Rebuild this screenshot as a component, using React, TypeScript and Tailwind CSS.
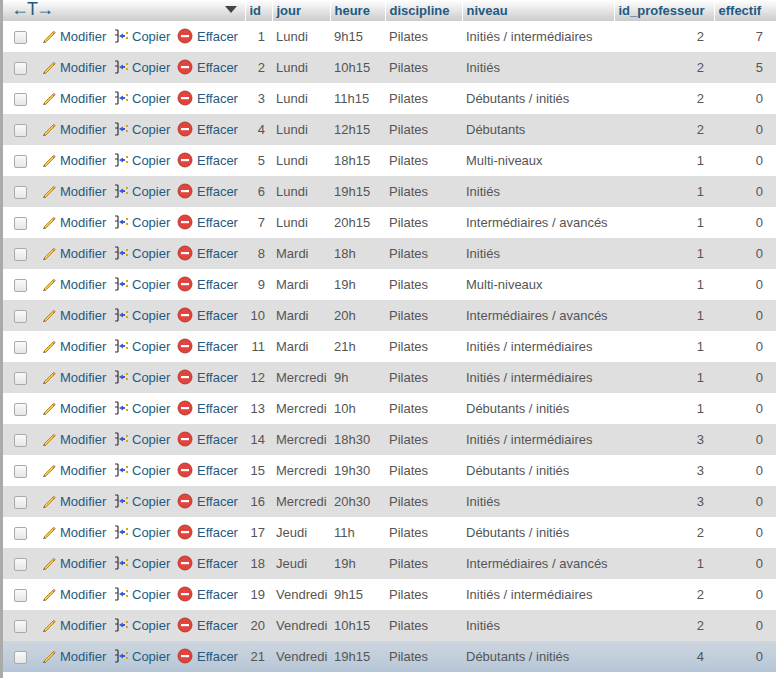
import React from "react";

const rows: [number, string, string, string, number, number][] = [
  [1, "Lundi", "9h15", "Initiés / intermédiaires", 2, 7],
  [2, "Lundi", "10h15", "Initiés", 2, 5],
  [3, "Lundi", "11h15", "Débutants / initiés", 2, 0],
  [4, "Lundi", "12h15", "Débutants", 2, 0],
  [5, "Lundi", "18h15", "Multi-niveaux", 1, 0],
  [6, "Lundi", "19h15", "Initiés", 1, 0],
  [7, "Lundi", "20h15", "Intermédiaires / avancés", 1, 0],
  [8, "Mardi", "18h", "Initiés", 1, 0],
  [9, "Mardi", "19h", "Multi-niveaux", 1, 0],
  [10, "Mardi", "20h", "Intermédiaires / avancés", 1, 0],
  [11, "Mardi", "21h", "Initiés / intermédiaires", 1, 0],
  [12, "Mercredi", "9h", "Initiés / intermédiaires", 1, 0],
  [13, "Mercredi", "10h", "Débutants / initiés", 1, 0],
  [14, "Mercredi", "18h30", "Initiés / intermédiaires", 3, 0],
  [15, "Mercredi", "19h30", "Débutants / initiés", 3, 0],
  [16, "Mercredi", "20h30", "Initiés", 3, 0],
  [17, "Jeudi", "11h", "Débutants / initiés", 2, 0],
  [18, "Jeudi", "19h", "Intermédiaires / avancés", 1, 0],
  [19, "Vendredi", "9h15", "Initiés / intermédiaires", 2, 0],
  [20, "Vendredi", "10h15", "Initiés", 2, 0],
  [21, "Vendredi", "19h15", "Débutants / initiés", 4, 0],
];

const Pencil = () => (
  <svg width="16" height="16" viewBox="0 0 16 16" className="inline-block mr-[3px] -mt-[2px] align-middle">
    <path d="M3 13 L11.5 4.5 L13 6 L4.5 14.5 Z" fill="#f2c94c" stroke="#b07a1a" strokeWidth="0.8" />
    <path d="M11.5 4.5 L12.8 3.2 L14.3 4.7 L13 6 Z" fill="#e8a0a0" stroke="#b07a1a" strokeWidth="0.8" />
    <path d="M3 13 L2 15 L4.5 14.5 Z" fill="#555" />
  </svg>
);

const CopyIcon = () => (
  <svg width="16" height="16" viewBox="0 0 16 16" className="inline-block mr-[3px] -mt-[2px] align-middle">
    <path d="M2 2 H5 M5 2 V7 M2 7 H5 M5 7 V14 M2 14 H5" stroke="#333" strokeWidth="1.2" fill="none" />
    <path d="M6 8 L10 5.5 V10.5 Z" fill="#3b5bd0" />
    <rect x="9" y="7" width="3" height="2" fill="#3b5bd0" />
    <rect x="13" y="4" width="2" height="2" fill="#d9a400" />
    <rect x="13" y="9" width="2" height="2" fill="#d9a400" />
  </svg>
);

const DeleteIcon = () => (
  <svg width="16" height="16" viewBox="0 0 16 16" className="inline-block mr-[4px] -mt-[2px] align-middle">
    <circle cx="8" cy="8" r="7" fill="#e0443c" stroke="#b02a22" strokeWidth="0.8" />
    <rect x="4" y="7" width="8" height="2.2" fill="#fff" />
  </svg>
);

export default function App() {
  return (
    <div className="w-[776px] h-[678px] overflow-hidden bg-white border-l-[3px] border-[#aaa]" style={{ fontFamily: '"Liberation Sans", Arial, sans-serif' }}>
      <table className="border-collapse text-[13px] table-fixed w-[773px]">
        <colgroup>
          <col className="w-[33px]" />
          <col className="w-[74px]" />
          <col className="w-[64px]" />
          <col className="w-[71px]" />
          <col className="w-[27px]" />
          <col className="w-[58px]" />
          <col className="w-[55px]" />
          <col className="w-[77px]" />
          <col className="w-[152px]" />
          <col className="w-[100px]" />
          <col className="w-[62px]" />
        </colgroup>
        <thead>
          <tr className="h-[21px] bg-gradient-to-b from-white to-[#cccccc] text-[#235a81] font-bold">
            <th colSpan={4} className="text-left font-normal border-r border-white pl-2 relative">
              <span className="text-[#235a81] text-[18px] tracking-[-2px] leading-none">←T→</span>
              <span className="absolute right-2 top-[6px] w-0 h-0 border-l-[6px] border-r-[6px] border-t-[7px] border-l-transparent border-r-transparent border-t-[#444]" />
            </th>
            <th className="text-left px-1 border-r border-white">id</th>
            <th className="text-left px-1 border-r border-white">jour</th>
            <th className="text-left px-1 border-r border-white">heure</th>
            <th className="text-left px-1 border-r border-white">discipline</th>
            <th className="text-left px-1 border-r border-white">niveau</th>
            <th className="text-left px-1 border-r border-white">id_professeur</th>
            <th className="text-left px-1">effectif</th>
          </tr>
        </thead>
        <tbody>
          {rows.map(([id, jour, heure, niveau, prof, eff], i) => (
            <tr
              key={id}
              className={
                "h-[31px] text-[#555] " +
                (i === 20
                  ? "bg-gradient-to-b from-[#ced6df] to-[#b6c6d7]"
                  : i % 2 === 1
                  ? "bg-[#dfdfdf]"
                  : "bg-white")
              }
            >
              <td className="pl-[11px]">
                <span className="inline-block w-[13px] h-[13px] rounded-[2px] border border-[#aaa] bg-gradient-to-b from-[#fafafa] to-[#e6e6e6] align-middle" />
              </td>
              <td className="text-[#235a81] whitespace-nowrap pl-[5px]"><Pencil />Modifier</td>
              <td className="text-[#235a81] whitespace-nowrap pl-[3px]"><CopyIcon />Copier</td>
              <td className="text-[#235a81] whitespace-nowrap pl-[3px]"><DeleteIcon />Effacer</td>
              <td className="text-right pr-[7px]">{id}</td>
              <td className="px-1 whitespace-nowrap">{jour}</td>
              <td className="px-1">{heure}</td>
              <td className="px-1">Pilates</td>
              <td className="px-1 whitespace-nowrap">{niveau}</td>
              <td className="text-right pr-[10px]">{prof}</td>
              <td className="text-right pr-[13px]">{eff}</td>
            </tr>
          ))}
        </tbody>
      </table>
    </div>
  );
}
